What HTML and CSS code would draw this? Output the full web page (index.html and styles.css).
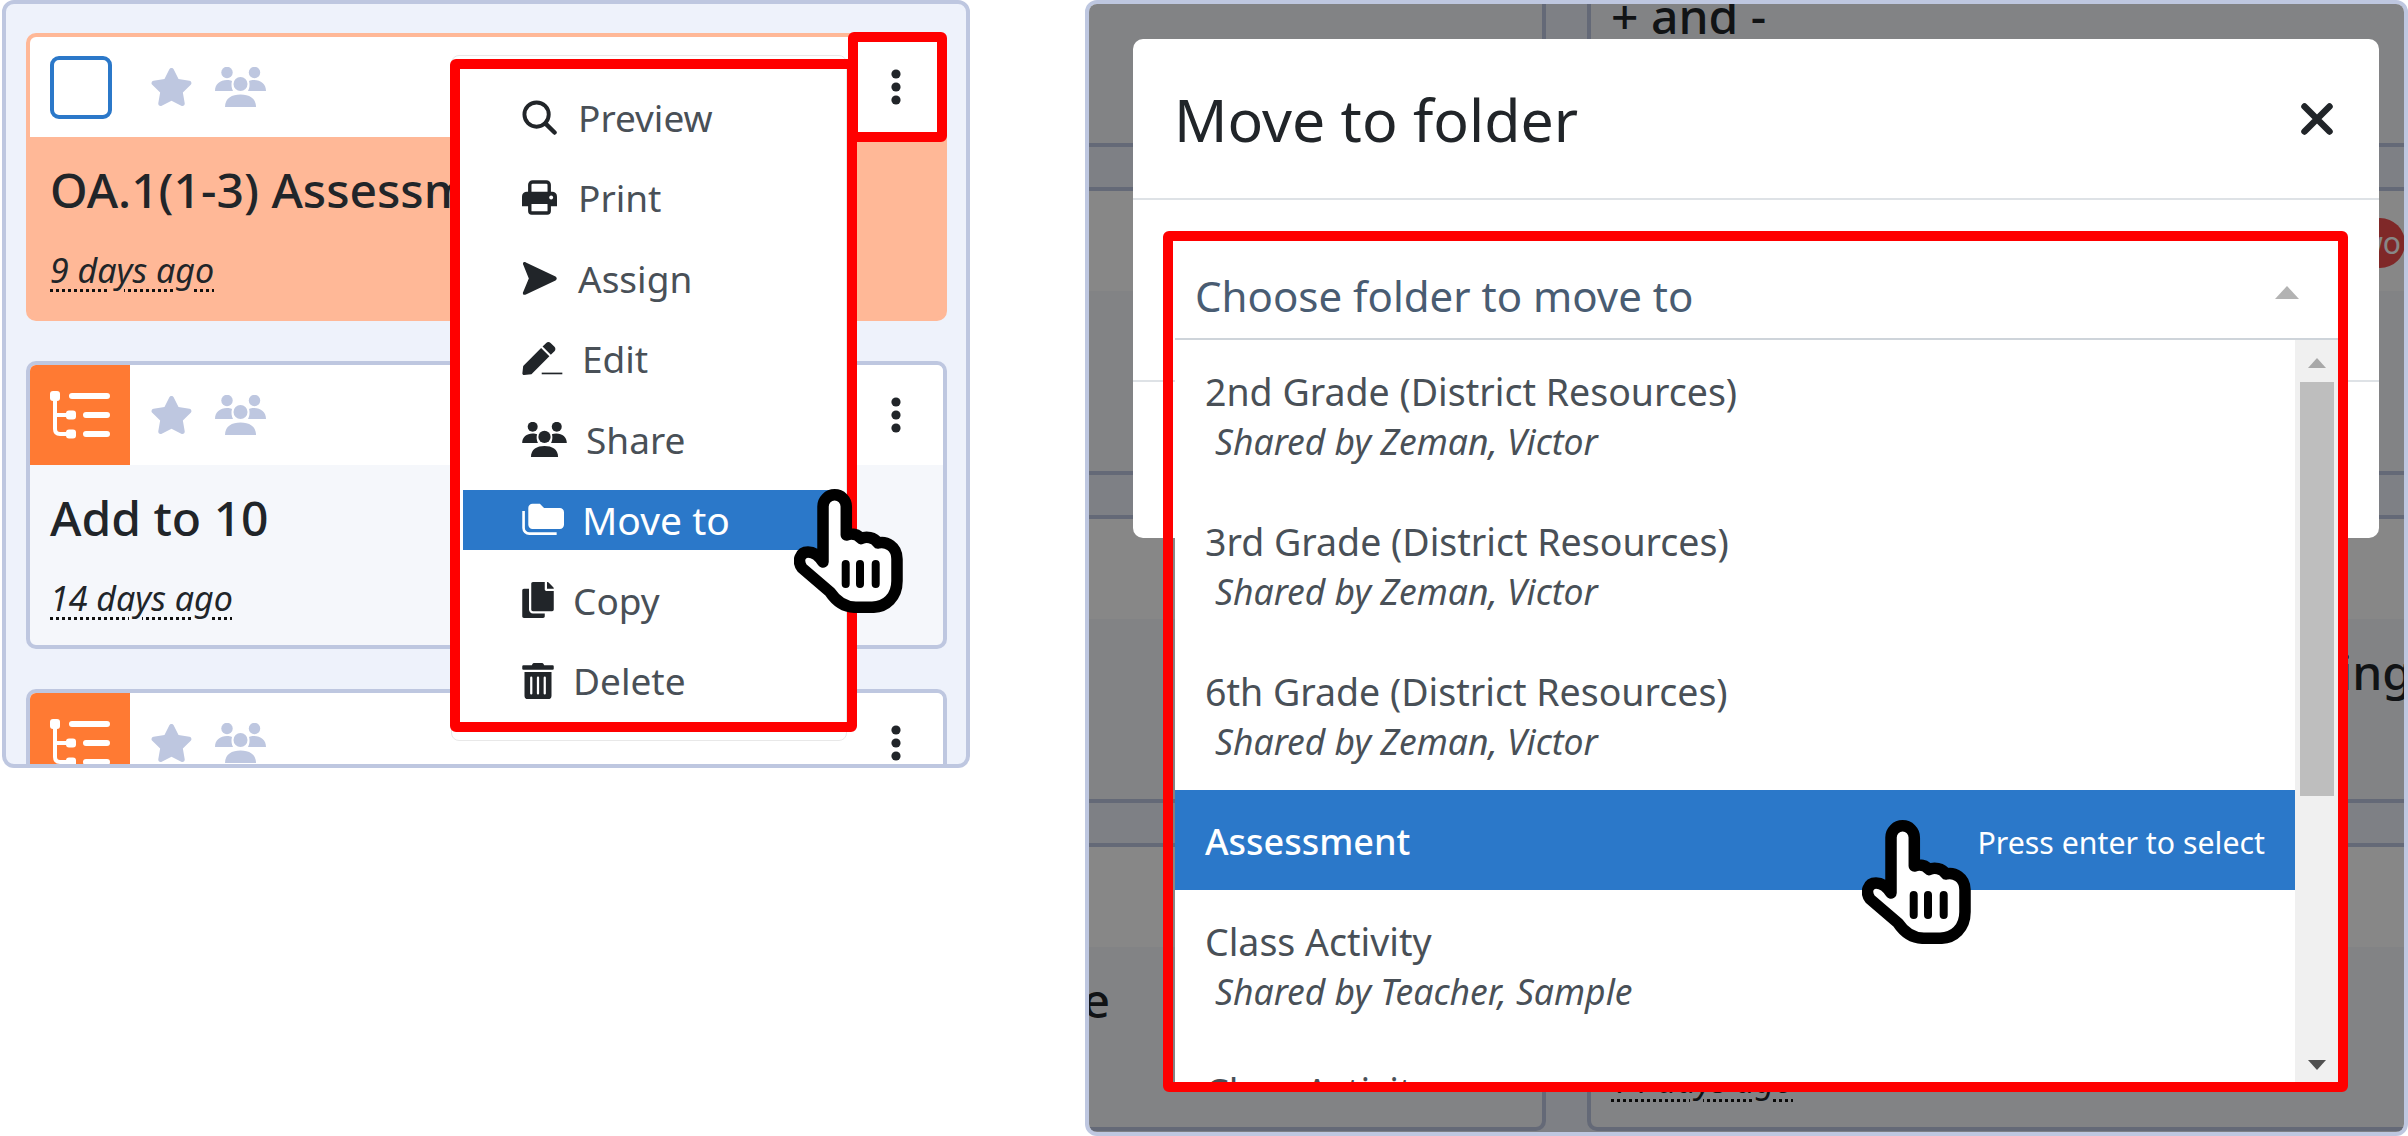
FILE: index.html
```html
<!DOCTYPE html>
<html lang="en">
<head>
  <meta charset="UTF-8" />
  <title>Move to folder</title>
  <link rel="stylesheet" href="styles.css">
</head>
<body>
  <svg class="sprite" aria-hidden="true">
    <symbol id="i-star" viewBox="0 0 576 512"><path d="M259.3 17.8L194 150.2 47.9 171.5c-26.2 3.8-36.7 36.1-17.7 54.6l105.7 103-25 145.5c-4.5 26.3 23.2 46 46.4 33.7L288 439.6l130.7 68.7c23.2 12.2 50.9-7.4 46.4-33.7l-25-145.5 105.7-103c19-18.5 8.5-50.8-17.7-54.6L382 150.2 316.7 17.8c-11.7-23.6-45.6-24.1-57.4 0z"/></symbol>
    <symbol id="i-group" viewBox="0 0 51 40"><circle cx="12" cy="5.5" r="5.7"/><circle cx="39.5" cy="5.5" r="5.7"/><circle cx="25.5" cy="17" r="7"/><path d="M10 40C10 31 17 27.5 25.5 27.5S41 31 41 40Z"/><path d="M0 24C0 17 5 13 12 13C14 13 15.500 13.300 17 14C16 17.500 16.500 21 18 24Z"/><path d="M51 24C51 17 46 13 39 13C37 13 35.500 13.300 34 14C35 17.500 34.500 21 33 24Z"/></symbol>
    <symbol id="i-tree" viewBox="0 0 60 48"><path d="M5 5V38Q5 43 10 43H20M5 24H20" fill="none" stroke="#fff" stroke-width="4"/><rect x="0" y="0" width="10" height="10" rx="3" fill="#fff"/><rect x="16" y="19.500" width="10" height="9" rx="3" fill="#fff"/><rect x="16" y="38.500" width="10" height="9" rx="3" fill="#fff"/><path d="M22 5H57M36 24H57M36 43H57" fill="none" stroke="#fff" stroke-width="6" stroke-linecap="round"/></symbol>
    <symbol id="i-dots" viewBox="0 0 10 36"><circle cx="5" cy="5" r="4.600"/><circle cx="5" cy="18" r="4.600"/><circle cx="5" cy="31" r="4.600"/></symbol>
    <symbol id="i-search" viewBox="0 0 36 36"><circle cx="15" cy="15" r="12.500" fill="none" stroke="currentColor" stroke-width="4"/><path d="M24 24L33.500 33.500" stroke="currentColor" stroke-width="4.500" stroke-linecap="round"/></symbol>
    <symbol id="i-print" viewBox="0 0 36 36"><path d="M8 13V5a3 3 0 0 1 3-3h14a3 3 0 0 1 3 3v8" fill="none" stroke="currentColor" stroke-width="3.500"/><path d="M5 12h26a5 5 0 0 1 5 5v10H0V17a5 5 0 0 1 5-5z"/><circle cx="30" cy="18" r="2" fill="#fff"/><rect x="8" y="23" width="20" height="11" rx="2" fill="#fff" stroke="currentColor" stroke-width="3.500"/></symbol>
    <symbol id="i-send" viewBox="0 0 36 34"><path d="M1 2C1 0 2.500 -.3 4 .5L34.500 15Q37 17 34.500 19L4 33.500C2 34.300 .5 33.500 1 31.500L7 17Z"/></symbol>
    <symbol id="i-pen" viewBox="0 0 640 512"><path d="M290.740 93.240l128.020 128.020-277.990 277.990-114.140 12.600C11.350 513.540-1.560 500.620.14 485.340l12.700-114.220 277.900-278zm207.200-19.060l-60.110-60.110c-18.750-18.750-49.160-18.750-67.910 0l-56.550 56.550 128.020 128.020 56.550-56.550c18.750-18.760 18.750-49.160 0-67.910z"/><path d="M300 488H620" fill="none" stroke="currentColor" stroke-width="26"/></symbol>
    <symbol id="i-folders" viewBox="0 0 40 30"><path d="M10 0h7l4 4h15a4 4 0 0 1 4 4v12a4 4 0 0 1-4 4H10a4 4 0 0 1-4-4V4a4 4 0 0 1 4-4z"/><path d="M1.500 7v16a5.500 5.500 0 0 0 5.500 5.500h26" fill="none" stroke="currentColor" stroke-width="2.500"/></symbol>
    <symbol id="i-copy" viewBox="0 0 448 512"><path d="M320 448v40c0 13.255-10.745 24-24 24H24c-13.255 0-24-10.745-24-24V120c0-13.255 10.745-24 24-24h72v296c0 30.879 25.121 56 56 56h168zm0-344V0H152c-13.255 0-24 10.745-24 24v368c0 13.255 10.745 24 24 24h272c13.255 0 24-10.745 24-24V128H344c-13.200 0-24-10.800-24-24zm120.971-31.029L375.029 7.029A24 24 0 0 0 358.059 0H352v96h96v-6.059a24 24 0 0 0-7.029-16.970z"/></symbol>
    <symbol id="i-trash" viewBox="0 0 448 512"><path d="M32 464a48 48 0 0 0 48 48h288a48 48 0 0 0 48-48V128H32zm272-256a16 16 0 0 1 32 0v224a16 16 0 0 1-32 0zm-96 0a16 16 0 0 1 32 0v224a16 16 0 0 1-32 0zm-96 0a16 16 0 0 1 32 0v224a16 16 0 0 1-32 0zM432 32H312l-9.400-18.700A24 24 0 0 0 281.100 0H166.800a23.720 23.720 0 0 0-21.400 13.300L136 32H16A16 16 0 0 0 0 48v32a16 16 0 0 0 16 16h416a16 16 0 0 0 16-16V48a16 16 0 0 0-16-16z"/></symbol>
    <symbol id="i-close" viewBox="0 0 32 32"><path d="M3.500 3.500L28.500 28.500M28.500 3.500L3.500 28.500" stroke="currentColor" stroke-width="6.500" stroke-linecap="round"/></symbol>
    <symbol id="i-hand" viewBox="0 0 109 124"><path d="M29 73V17.500a11.650 11.650 0 0 1 23.300 0V46C58 44 63 45 67 49.500C72 47 80 48 84 54C92 52 103 57 103 70V92C103 108 92 118.300 78 118.300H62C50 118.300 42 112 36 103L8 79C3 72 6 63 14 63C20 63 25 67 29 73Z" fill="#fff" stroke="#000" stroke-width="11.500" stroke-linejoin="round"/><path d="M51.700 75V95M66 75V95M81.700 75V95" fill="none" stroke="#000" stroke-width="8" stroke-linecap="round"/></symbol>
  </svg>

  <!-- Step 1: card menu -->
  <div class="panel panel-left">
    <div class="card-list">
      <div class="card card-selected">
        <div class="card-head">
          <span class="check-box"></span>
          <svg class="icon-star"><use href="#i-star"/></svg>
          <svg class="icon-group"><use href="#i-group"/></svg>
          <svg class="icon-dots"><use href="#i-dots"/></svg>
        </div>
        <div class="card-body">
          <div class="card-title">OA.1(1-3) Assessment</div>
          <div class="card-date"><span>9 days ago</span></div>
        </div>
      </div>
      <div class="card">
        <div class="card-head">
          <span class="type-box"><svg class="icon-tree"><use href="#i-tree"/></svg></span>
          <svg class="icon-star"><use href="#i-star"/></svg>
          <svg class="icon-group"><use href="#i-group"/></svg>
          <svg class="icon-dots"><use href="#i-dots"/></svg>
        </div>
        <div class="card-body">
          <div class="card-title">Add to 10</div>
          <div class="card-date"><span>14 days ago</span></div>
        </div>
      </div>
      <div class="card">
        <div class="card-head">
          <span class="type-box"><svg class="icon-tree"><use href="#i-tree"/></svg></span>
          <svg class="icon-star"><use href="#i-star"/></svg>
          <svg class="icon-group"><use href="#i-group"/></svg>
          <svg class="icon-dots"><use href="#i-dots"/></svg>
        </div>
      </div>
    </div>

    <div class="card-menu">
      <div class="menu-item"><svg class="mi mi-search"><use href="#i-search"/></svg>Preview</div>
      <div class="menu-item"><svg class="mi mi-search"><use href="#i-print"/></svg>Print</div>
      <div class="menu-item"><svg class="mi mi-search"><use href="#i-send"/></svg>Assign</div>
      <div class="menu-item"><svg class="mi mi-pen"><use href="#i-pen"/></svg>Edit</div>
      <div class="menu-item"><svg class="mi mi-share"><use href="#i-group"/></svg>Share</div>
      <div class="menu-item active"><svg class="mi mi-pen"><use href="#i-folders"/></svg>Move to</div>
      <div class="menu-item"><svg class="mi mi-copy"><use href="#i-copy"/></svg>Copy</div>
      <div class="menu-item"><svg class="mi mi-copy"><use href="#i-trash"/></svg>Delete</div>
    </div>

    <div class="mark mark-menu"></div>
    <div class="mark mark-dots"></div>
    <svg class="hand hand-menu"><use href="#i-hand"/></svg>
  </div>

  <!-- Step 2: move to folder dialog -->
  <div class="panel panel-right">
    <div class="back-grid">
      <div class="card"><div class="card-head"></div></div>
      <div class="card"><div class="card-head"></div><div class="card-body"><div class="card-title">+ and -</div></div></div>
      <div class="card"><div class="card-head"></div></div>
      <div class="card"><div class="card-head"><span class="avatar">wo</span></div></div>
      <div class="card"><div class="card-head"></div></div>
      <div class="card"><div class="card-head"></div><div class="card-body"><div class="card-title title-tail-b">Number Facts and Counting</div></div></div>
      <div class="card"><div class="card-head"></div><div class="card-body"><div class="card-title title-tail-a">Practice</div></div></div>
      <div class="card"><div class="card-head"></div><div class="card-body"><div class="card-title">&nbsp;</div><div class="card-date"><span>14 days ago</span></div></div></div>
    </div>
    <div class="backdrop"></div>

    <div class="modal">
      <div class="modal-head">
        <h2>Move to folder</h2>
        <svg class="icon-close"><use href="#i-close"/></svg>
      </div>
      <div class="modal-body"></div>
      <div class="modal-foot"></div>

      <div class="picker">
        <div class="picker-value">
          <span>Choose folder to move to</span>
          <i class="tri-up"></i>
        </div>
        <div class="picker-drop">
          <div class="option-list">
            <div class="option"><div class="option-name">2nd Grade (District Resources)</div><div class="option-sub">Shared by Zeman, Victor</div></div>
            <div class="option"><div class="option-name">3rd Grade (District Resources)</div><div class="option-sub">Shared by Zeman, Victor</div></div>
            <div class="option"><div class="option-name">6th Grade (District Resources)</div><div class="option-sub">Shared by Zeman, Victor</div></div>
            <div class="option active"><div class="option-name">Assessment</div><div class="option-hint">Press enter to select</div></div>
            <div class="option"><div class="option-name">Class Activity</div><div class="option-sub">Shared by Teacher, Sample</div></div>
            <div class="option"><div class="option-name">Class Activity</div></div>
          </div>
          <div class="scrollbar">
            <i class="sb-up"></i>
            <div class="sb-thumb"></div>
            <i class="sb-down"></i>
          </div>
        </div>
      </div>
    </div>

    <div class="mark mark-picker"></div>
    <svg class="hand hand-picker"><use href="#i-hand"/></svg>
  </div>
</body>
</html>
```

FILE: styles.css
```css
* {
  box-sizing: border-box;
}

body {
  margin: 0;
  height: 1136px;
  overflow: hidden;
  display: flex;
  align-items: flex-start;
  padding-left: 2px;
  background: white;
  color: #212529;
  font-family: "Noto Sans", "Open Sans", sans-serif;
}

.sprite {
  position: absolute;
  width: 0;
  height: 0;
}

.panel {
  position: relative;
  flex: none;
  overflow: hidden;
  background: #eef2fb;
  border: 4px solid #bec7e0;
  border-radius: 12px;
}

.panel-left {
  width: 968px;
  height: 768px;
}

.panel-right {
  width: 1323px;
  height: 1136px;
  margin-left: 115px;
}

.card-list {
  display: flex;
  flex-direction: column;
  gap: 40px;
  padding: 29px 19px 0 20px;
}

.card {
  flex: none;
  height: 288px;
  overflow: hidden;
  background: #f5f7fb;
  border: 4px solid #bec7e0;
  border-radius: 10px;
}

.card-selected {
  background: #ffb897;
  border-color: #ffb897;
}

.card-head {
  position: relative;
  display: flex;
  align-items: center;
  height: 100px;
  background: white;
}

.check-box {
  width: 62px;
  height: 63px;
  margin-left: 20px;
  margin-right: 38px;
  border: 4px solid #2b78c9;
  border-radius: 9px;
}

.type-box {
  display: flex;
  align-items: center;
  justify-content: center;
  width: 100px;
  height: 100px;
  margin-right: 20px;
  background: #ff7a33;
}

.icon-tree {
  width: 60px;
  height: 48px;
}

.icon-star {
  width: 43px;
  height: 40px;
  fill: #bec7e0;
}

.icon-group {
  width: 51px;
  height: 40px;
  margin-left: 22px;
  fill: #bec7e0;
}

.icon-dots {
  width: 10px;
  height: 36px;
  margin-left: auto;
  margin-right: 42px;
  fill: #212529;
}

.card-body {
  padding: 23px 20px 0;
}

.card-title {
  height: 60px;
  font-size: 48px;
  font-weight: 500;
  line-height: 60px;
  white-space: nowrap;
}

.card-date {
  margin-top: 28px;
  font-size: 34px;
  font-style: italic;
  line-height: 44px;
}

.card-date span {
  text-decoration: underline dotted #111 3px;
  text-underline-offset: 6px;
}

/* Dropdown on the first card */
.card-menu {
  position: absolute;
  top: 51px;
  left: 445px;
  display: flex;
  flex-direction: column;
  gap: 20.500px;
  width: 396px;
  height: 686px;
  padding: 31px 7px 0 11px;
  background: white;
  border: 1px solid #e8e8e8;
  border-radius: 8px;
}

.menu-item {
  display: flex;
  align-items: center;
  gap: 21px;
  height: 60px;
  padding-left: 59px;
  color: #495057;
  font-size: 37px;
  white-space: nowrap;
}

.menu-item.active {
  background: #2b78c9;
  color: white;
  font-size: 39px;
}

.mi {
  flex: none;
  color: #212529;
  fill: #212529;
}

.active .mi {
  color: white;
  fill: white;
}

.mi-search {
  width: 35px;
  height: 35px;
}

.mi-pen {
  width: 42px;
  height: 33px;
  margin-right: -3px;
}

.mi-share {
  width: 45px;
  height: 35px;
  margin-right: -2px;
}

.mi-copy {
  width: 32px;
  height: 36px;
  margin-right: -2px;
}

/* Red callouts and cursors */
.mark {
  position: absolute;
  border: 10px solid #ff0000;
  border-radius: 6px;
}

.mark-menu {
  top: 55px;
  left: 444px;
  width: 407px;
  height: 673px;
}

.mark-dots {
  top: 28px;
  left: 842px;
  width: 99px;
  height: 110px;
}

.mark-picker {
  top: 227px;
  left: 74px;
  width: 1185px;
  height: 861px;
}

.hand {
  position: absolute;
  width: 109px;
  height: 124px;
}

.hand-menu {
  top: 485px;
  left: 788px;
}

.hand-picker {
  top: 816px;
  left: 773px;
}

/* Page behind the dialog */
.back-grid {
  display: grid;
  grid-template-columns: 921px 921px;
  gap: 40px 41px;
  margin: -145px 0 0 -464px;
}

.avatar {
  position: absolute;
  top: 27px;
  left: 764px;
  width: 50px;
  height: 50px;
  overflow: hidden;
  background: #f04d4d;
  border-radius: 50%;
  color: white;
  font-size: 30px;
  line-height: 50px;
  text-align: center;
}

.title-tail-a {
  padding-right: 412px;
  text-align: right;
}

.title-tail-b {
  padding-right: 72px;
  text-align: right;
}

.backdrop {
  position: absolute;
  top: 0;
  right: 0;
  bottom: 0;
  left: 0;
  background: rgba(0, 0, 0, 0.47);
}

/* Dialog */
.modal {
  position: absolute;
  top: 35px;
  left: 44px;
  width: 1246px;
  height: 499px;
  background: white;
  border-radius: 10px;
}

.modal-head {
  display: flex;
  justify-content: space-between;
  align-items: center;
  height: 161px;
  padding: 0 46px 0 41px;
  border-bottom: 2px solid #dee2e6;
}

.modal-head h2 {
  margin: 0;
  font-size: 59px;
  font-weight: 400;
}

.icon-close {
  width: 32px;
  height: 32px;
}

.modal-body {
  height: 180px;
}

.modal-foot {
  border-top: 2px solid #dee2e6;
}

.picker {
  position: absolute;
  top: 202px;
  left: 42px;
  width: 1163px;
}

.picker-value {
  display: flex;
  justify-content: space-between;
  align-items: center;
  height: 99px;
  padding: 12px 39px 0 20px;
  background: white;
  border-bottom: 2px solid #ced4da;
  color: #495c72;
  font-size: 42px;
}

.tri-up {
  width: 0;
  height: 0;
  margin-top: -6px;
  border-right: 12px solid transparent;
  border-bottom: 13px solid #b3b3b3;
  border-left: 12px solid transparent;
}

.picker-drop {
  display: flex;
  height: 742px;
  overflow: hidden;
  background: white;
}

.option-list {
  flex: 1;
  overflow: hidden;
}

.option {
  height: 150px;
  padding: 28px 30px 0 30px;
  color: #495057;
}

.option-name {
  font-size: 37.500px;
  line-height: 47px;
}

.option-sub {
  padding-left: 10px;
  font-size: 35.500px;
  font-style: italic;
  line-height: 52px;
}

.option.active {
  display: flex;
  justify-content: space-between;
  height: 100px;
  background: #2b78c9;
  color: white;
}

.option.active .option-name {
  font-size: 36px;
  font-weight: 500;
}

.option-hint {
  font-size: 30.300px;
  line-height: 50px;
}

.scrollbar {
  display: flex;
  flex: none;
  flex-direction: column;
  align-items: center;
  width: 43px;
  padding: 18px 0 12px;
  background: #f0f0f0;
}

.sb-up {
  width: 0;
  height: 0;
  border-right: 9px solid transparent;
  border-bottom: 10px solid #a8a8a8;
  border-left: 9px solid transparent;
}

.sb-thumb {
  width: 34px;
  height: 414px;
  margin-top: 14px;
  background: #bebebe;
}

.sb-down {
  width: 0;
  height: 0;
  margin-top: auto;
  border-top: 10px solid #505050;
  border-right: 9px solid transparent;
  border-left: 9px solid transparent;
}
```
